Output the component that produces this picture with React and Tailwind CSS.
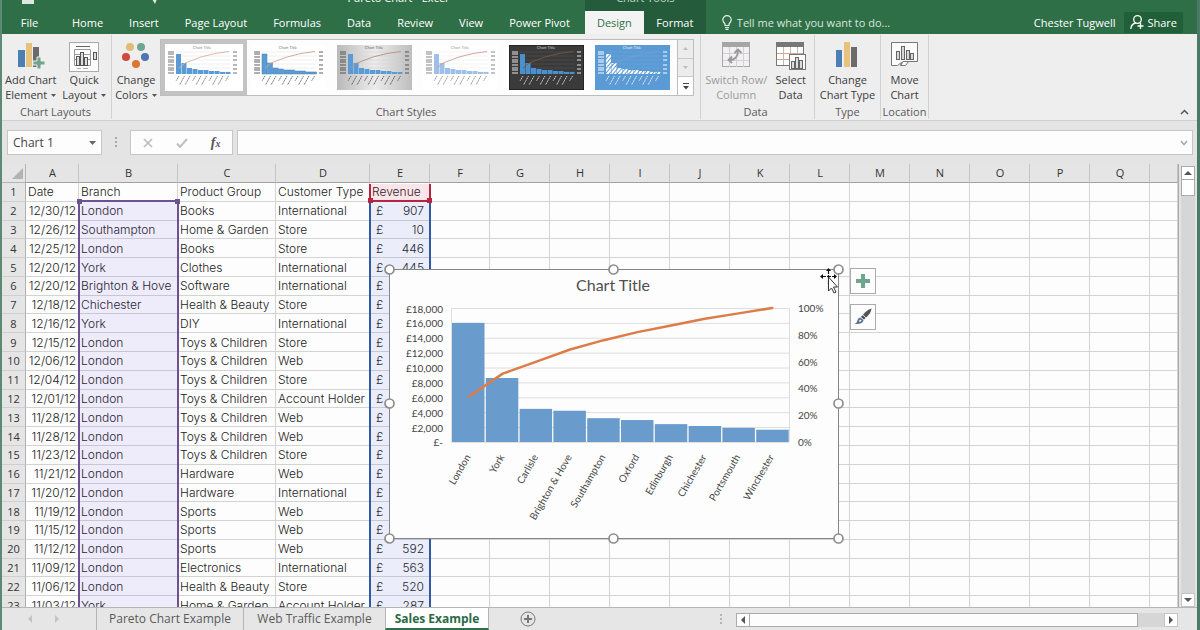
import { useState } from "react";

const tabs = ["Home", "Insert", "Page Layout", "Formulas", "Data", "Review", "View", "Power Pivot"];
const letters = ["A", "B", "C", "D", "E", "F", "G", "H", "I", "J", "K", "L", "M", "N", "O", "P", "Q", ""];

const rows = [
  ["12/30/12", "London", "Books", "International", "907"],
  ["12/26/12", "Southampton", "Home & Garden", "Store", "10"],
  ["12/25/12", "London", "Books", "Store", "446"],
  ["12/20/12", "York", "Clothes", "International", "445"],
  ["12/20/12", "Brighton & Hove", "Software", "International", ""],
  ["12/18/12", "Chichester", "Health & Beauty", "Store", ""],
  ["12/16/12", "York", "DIY", "International", ""],
  ["12/15/12", "London", "Toys & Children", "Store", ""],
  ["12/06/12", "London", "Toys & Children", "Web", ""],
  ["12/04/12", "London", "Toys & Children", "Store", ""],
  ["12/01/12", "London", "Toys & Children", "Account Holder", ""],
  ["11/28/12", "London", "Toys & Children", "Web", ""],
  ["11/28/12", "London", "Toys & Children", "Web", ""],
  ["11/23/12", "London", "Toys & Children", "Store", ""],
  ["11/21/12", "London", "Hardware", "Web", ""],
  ["11/20/12", "London", "Hardware", "International", ""],
  ["11/19/12", "London", "Sports", "Web", ""],
  ["11/15/12", "London", "Sports", "Web", ""],
  ["11/12/12", "London", "Sports", "Web", "592"],
  ["11/09/12", "London", "Electronics", "International", "563"],
  ["11/06/12", "London", "Health & Beauty", "Store", "520"],
  ["11/03/12", "York", "Home & Garden", "Account Holder", "287"],
];

const branches = [
  { name: "London", value: 16000, total: 34 },
  { name: "York", value: 8600, total: 51 },
  { name: "Carlisle", value: 4450, total: 60 },
  { name: "Brighton & Hove", value: 4200, total: 69 },
  { name: "Southampton", value: 3200, total: 76 },
  { name: "Oxford", value: 2950, total: 82 },
  { name: "Edinburgh", value: 2400, total: 87 },
  { name: "Chichester", value: 2150, total: 92 },
  { name: "Portsmouth", value: 1900, total: 96 },
  { name: "Winchester", value: 1650, total: 100 },
];

const Caret = () => (
  <svg className="inline-block ml-1 mb-px" width="5" height="3" viewBox="0 0 5 3">
    <path d="M0 0h5L2.5 3z" fill="#555" />
  </svg>
);

const AddElementIcon = () => (
  <svg width="28" height="28" viewBox="0 0 28 28">
    <rect x="1" y="8" width="7" height="17" fill="#4d7fb5" />
    <rect x="9" y="1" width="6" height="24" fill="#e6c27c" />
    <rect x="16" y="5" width="6" height="20" fill="#6b6b6b" />
    <path d="M20 15h4v4h4v4h-4v4h-4v-4h-4v-4h4z" fill="#6fa58b" stroke="#eee" strokeWidth="1" />
  </svg>
);

const QuickLayoutIcon = () => (
  <svg width="30" height="30" viewBox="0 0 30 30">
    <rect x=".5" y=".5" width="29" height="29" fill="#fcfcfc" stroke="#aaa" />
    <path d="M7 4.500h14" stroke="#666" />
    <path d="M5.500 7.500h16v16h-16zM5.500 12.500h16M5.500 17.500h16" fill="none" stroke="#999" />
    <g fill="#ddd" stroke="#555">
      <rect x="7.500" y="14.500" width="3" height="9" />
      <rect x="11.500" y="10.500" width="3" height="13" />
      <rect x="15.500" y="15.500" width="3" height="8" />
      <rect x="24.500" y="10.500" width="3" height="7" />
    </g>
    <path d="M8 26.500h4M14 26.500h5" stroke="#aaa" />
  </svg>
);

const ColorsIcon = () => (
  <svg width="28" height="28" viewBox="0 0 28 28">
    <circle cx="8" cy="5" r="4" fill="#e0bb74" />
    <circle cx="19" cy="5" r="4" fill="#6da590" />
    <circle cx="4" cy="15" r="4" fill="#cf4a3c" />
    <circle cx="23" cy="15" r="4" fill="#4f74b3" />
    <circle cx="14" cy="22" r="4" fill="#dd7431" />
  </svg>
);

const SwitchIcon = () => (
  <svg width="28" height="26" viewBox="0 0 28 26">
    <rect x=".5" y=".5" width="27" height="24" fill="#f2f0f2" stroke="#aaa" />
    <path d="M0 0h28v5H0z" fill="#a5a5a5" />
    <path d="M1 11.500h26M1 18.500h26M7.500 5v20M14.500 5v20M21.500 5v20" stroke="#d2d2d2" />
    <path d="M7 18c6 0 9-3 9-9M10 14.500L6.500 18l3.500 3M12.500 11L16 7.500 19.500 11" fill="none" stroke="#999" strokeWidth="1.800" />
  </svg>
);

const SelectDataIcon = () => (
  <svg width="30" height="28" viewBox="0 0 30 28">
    <rect x=".5" y=".5" width="27" height="23" fill="#fff" stroke="#777" />
    <path d="M0 0h28v5H0z" fill="#777" />
    <path d="M1 11.500h26M1 17.500h26" stroke="#d8a483" />
    <path d="M7.500 5v18M14.500 5v18M21.500 5v18" stroke="#bbb" />
    <rect x="13.500" y="12.500" width="16" height="15" fill="#fff" stroke="#777" />
    <g fill="#ddd" stroke="#666">
      <rect x="15.500" y="19.500" width="3" height="7" />
      <rect x="19.500" y="15.500" width="3" height="11" />
      <rect x="23.500" y="18.500" width="3" height="8" />
    </g>
  </svg>
);

const ChartTypeIcon = () => (
  <svg width="24" height="26" viewBox="0 0 24 26">
    <rect x="1" y="8" width="6" height="17" fill="#4d7fb5" />
    <rect x="9" y="0" width="6" height="25" fill="#e6c27c" />
    <rect x="16" y="5" width="6" height="20" fill="#6b6b6b" />
  </svg>
);

const MoveChartIcon = () => (
  <svg width="28" height="26" viewBox="0 0 28 26">
    <path d="M.5.500h26v19h-9l-3 4h-5l1-3-4 3h-6z" fill="#fbfbfb" stroke="#777" />
    <path d="M10 23l2-3.500h7" fill="none" stroke="#777" />
    <g fill="#d8d8d8" stroke="#666">
      <rect x="5.500" y="9.500" width="3" height="8" />
      <rect x="10.500" y="4.500" width="3" height="13" />
      <rect x="15.500" y="8.500" width="3" height="9" />
      <rect x="19.500" y="11.500" width="3" height="6" />
    </g>
  </svg>
);

const styles = [
  { bg: "#fff", bar: "#5b9bd5", ink: "#888", line: "#d9b3a0", grid: "#e4e4e4" },
  { bg: "#fff", bar: "#5b9bd5", ink: "#777", line: "#c9a596", grid: "#e4e4e4", edge: "#4580b4" },
  { bg: "url(#silver)", bar: "#5b9bd5", ink: "#666", line: "#b98e80", grid: "#d4d4d4" },
  { bg: "#fff", bar: "#9dbfe8", ink: "#999", line: "#c99f92", grid: "#ececec" },
  { bg: "#3a3a3a", bar: "#4a90cf", ink: "#ccc", line: "#7c5546", grid: "#555", frame: "#111" },
  { bg: "#5b9bd5", bar: "url(#hatch)", ink: "#e2edf8", line: "#7d9cc4", grid: "#6ba5da" },
];

const thumbBars = [20, 11, 6, 5, 4, 4, 3, 3, 2, 2];

const Thumb = ({ s }) => (
  <svg width="75" height="45" viewBox="0 0 75 45">
    <defs>
      <linearGradient id="silver">
        <stop offset="0" stopColor="#b9b9b9" />
        <stop offset=".5" stopColor="#ececec" />
        <stop offset="1" stopColor="#bdbdbd" />
      </linearGradient>
      <pattern id="hatch" width="3" height="3" patternUnits="userSpaceOnUse" patternTransform="rotate(40)">
        <rect width="2" height="3" fill="#fff" />
      </pattern>
    </defs>
    <rect width="75" height="45" fill={s.bg} stroke={s.frame} />
    <text x="37" y="4" fontSize="4" textAnchor="middle" fill={s.ink} fontFamily="Lato">
      Chart Title
    </text>
    {[7, 11, 15, 19, 23, 27].map((y) => (
      <path key={y} d={`M11 ${y}h54`} stroke={s.grid} strokeWidth=".6" />
    ))}
    {[7, 9, 12, 15, 17, 20, 23, 25, 28].map((y) => (
      <path key={y} d={`M3 ${y}h6`} stroke={s.ink} strokeWidth="1.200" />
    ))}
    {[7, 11, 15, 20, 24, 28].map((y) => (
      <path key={y} d={`M68 ${y}h4`} stroke={s.ink} strokeWidth="1.200" />
    ))}
    {thumbBars.map((h, i) => (
      <g key={i}>
        <rect x={11 + i * 5.5} y={29 - h} width="5" height={h} fill={s.bar} stroke={s.edge} strokeWidth=".5" />
        <path
          d={`M${14 + i * 5.5} 31l${i % 3 === 0 ? -3 : -5} ${i % 3 === 0 ? 5 : 9}`}
          stroke={s.ink}
          strokeWidth="1"
          strokeDasharray="1.500 .5"
        />
      </g>
    ))}
    <path d="M14 23L20 18 36 12 50 8.500 64 6.500" fill="none" stroke={s.line} strokeWidth=".9" />
  </svg>
);

const BigButton = ({ icon, top, bottom, caret, disabled }) => (
  <button
    disabled={disabled}
    className={`flex flex-col items-center pt-[7px] text-[11px] leading-[15px] whitespace-nowrap ${
      disabled ? "text-[#9b9b9b]" : "text-[#3c3c3c]"
    }`}
  >
    <span className="h-[30px]">{icon}</span>
    <span>{top}</span>
    <span>
      {bottom}
      {caret && <Caret />}
    </span>
  </button>
);

const Group = ({ title, className, children }) => (
  <section className={`flex flex-col justify-between border-r border-[#d2d2d2] ${className}`}>
    <div className="flex justify-around">{children}</div>
    <h2 className="text-center text-[11px] leading-[14px] text-[#5a5a5a]">{title}</h2>
  </section>
);

const Ribbon = () => (
  <div className="flex h-[87px] bg-[#eeeeee] border-b border-[#d0d0d0] py-px">
    <Group title="Chart Layouts" className="w-[110px] pr-[2px]">
      <BigButton icon={<AddElementIcon />} top="Add Chart" bottom="Element" caret />
      <BigButton icon={<QuickLayoutIcon />} top="Quick" bottom="Layout" caret />
    </Group>
    <Group title="Chart Styles" className="w-[589px]">
      <div className="flex w-full">
        <div className="w-[48px] flex justify-center">
          <BigButton icon={<ColorsIcon />} top="Change" bottom="Colors" caret />
        </div>
        <div className="flex mt-1 h-[57px] bg-[#fdfdfd] border border-[#bdbdbd]">
          {styles.map((s, i) => (
            <button
              key={i}
              aria-label={`Style ${i + 1}`}
              className={`w-[86px] flex items-center justify-start border-4 ${
                i === 0 ? "border-[#c3c3c3] bg-white" : "border-transparent"
              }`}
            >
              <Thumb s={s} />
            </button>
          ))}
          <div className="flex flex-col w-[16px] border-l border-[#bdbdbd] bg-[#ececec]">
            <button aria-label="Scroll up" className="flex-1 flex items-center justify-center border-b border-[#c8c8c8]">
              <svg width="5" height="3"><path d="M0 3h5L2.500 0z" fill="#bbb" /></svg>
            </button>
            <button aria-label="Scroll down" className="flex-1 flex items-center justify-center border-b border-[#c8c8c8]">
              <svg width="5" height="3"><path d="M0 0h5L2.500 3z" fill="#bbb" /></svg>
            </button>
            <button aria-label="More styles" className="flex-1 flex items-center justify-center bg-white">
              <svg width="6" height="7"><path d="M0 0h6v1H0zM0 3h6L3 6.500z" fill="#444" /></svg>
            </button>
          </div>
        </div>
      </div>
    </Group>
    <Group title="Data" className="w-[114px] pr-1">
      <BigButton icon={<SwitchIcon />} top="Switch Row/" bottom="Column" disabled />
      <BigButton icon={<SelectDataIcon />} top="Select" bottom="Data" />
    </Group>
    <Group title="Type" className="w-[66px]">
      <BigButton icon={<ChartTypeIcon />} top="Change" bottom="Chart Type" />
    </Group>
    <Group title="Location" className="w-[48px]">
      <BigButton icon={<MoveChartIcon />} top="Move" bottom="Chart" />
    </Group>
    <button aria-label="Collapse the ribbon" className="ml-auto self-end p-2 pb-1">
      <svg width="9" height="6"><path d="M1 5l3.500-3.500L8 5" fill="none" stroke="#555" strokeWidth="1.500" /></svg>
    </button>
  </div>
);

const Header = () => (
  <header className="flex h-[34px] bg-[#2f6f48] text-white text-[11px] leading-4 font-medium overflow-hidden">
    <div className="flex flex-col">
      <div className="flex items-end h-[11px] pb-[5px] pl-[20px] overflow-hidden">
        <svg className="-mb-px" width="136" height="8">
          <path d="M0 0h12v5H0zM130 0h5l-2 5z" fill="#dbe9e0" />
        </svg>
        <span className="ml-auto mr-[135px]">Pareto Chart - Excel</span>
      </div>
      <div className="flex h-[23px]">
        <button className="w-[57px] pr-[2px]">File</button>
        {tabs.map((t) => (
          <button key={t} className="px-[13px]">
            {t}
          </button>
        ))}
      </div>
    </div>
    <div className="flex flex-col ml-[2px] bg-[#245c3b]">
      <div className="flex items-end justify-center h-[11px] pb-[5px] text-[#c5d8cc] overflow-hidden">Chart Tools</div>
      <div className="flex h-[23px]">
        <button className="w-[59px] bg-[#f3f3f3] text-[#2f6f48]">Design</button>
        <button className="w-[62px]">Format</button>
      </div>
    </div>
    <div className="flex flex-1 items-center mt-[11px] pl-4 pr-[14px]">
      <svg width="10" height="15" viewBox="0 0 10 15" fill="none" stroke="#e8f1eb">
        <path d="M3 10.500V9C1.500 7.500.8 6.500.8 4.800a4.200 4.200 0 018.400 0C9.200 6.500 8.500 7.500 7 9v1.500zM3 12.500h4M3.500 14.300h3" strokeWidth="1.200" />
      </svg>
      <input
        aria-label="Tell me what you want to do"
        placeholder="Tell me what you want to do..."
        className="ml-[5px] w-[200px] bg-transparent outline-none placeholder:text-[#d8e6dc]"
      />
      <span className="ml-auto mr-[9px]">Chester Tugwell</span>
      <button className="flex items-center h-[21px] px-[6px] bg-[#215f39]">
        <svg className="mr-[3px]" width="14" height="15" viewBox="0 0 14 15" fill="none" stroke="#fff" strokeWidth="1.300">
          <circle cx="7.500" cy="4.500" r="3.800" />
          <path d="M.8 14c.3-3.500 2-5.500 5-6M10.500 8v6M7.500 11h6" />
        </svg>
        Share
      </button>
    </div>
  </header>
);

const FormulaBar = () => {
  const [name, setName] = useState("Chart 1");
  const [formula, setFormula] = useState("");

  return (
    <div className="flex items-center h-[43px] pl-[5px] pr-1 bg-[#e4e4e4]">
      <div className="flex items-center w-[95px] h-[25px] bg-[#fdfdfd] border border-[#c6c6c6] pr-[5px]">
        <input
          aria-label="Name Box"
          value={name}
          onChange={(e) => setName(e.target.value)}
          className="flex-1 min-w-0 pl-[5px] text-[12px] text-[#444] outline-none"
        />
        <button aria-label="Open names">
          <svg width="7" height="4"><path d="M0 0h7L3.500 4z" fill="#666" /></svg>
        </button>
      </div>
      <svg className="mx-[13px]" width="2" height="11" fill="#aaa">
        <path d="M0 0h2v2H0zM0 4h2v2H0zM0 8h2v2H0z" />
      </svg>
      <div className="flex items-center justify-around w-[103px] h-[25px] bg-[#fdfdfd] border border-[#c6c6c6]">
        <button aria-label="Cancel">
          <svg width="10" height="10"><path d="M1 1l8 8M9 1L1 9" stroke="#bbb" strokeWidth="1.600" /></svg>
        </button>
        <button aria-label="Enter">
          <svg width="12" height="10"><path d="M1 5.500L4 9l7-8" fill="none" stroke="#c0c0c0" strokeWidth="2" /></svg>
        </button>
        <button aria-label="Insert function" className="font-['Liberation_Serif',serif] italic font-bold text-[14px] text-[#555]">
          f<span className="text-[10px]">x</span>
        </button>
      </div>
      <div className="flex flex-1 items-center h-[25px] ml-1 bg-[#fdfdfd] border border-[#c6c6c6] pr-1">
        <input
          aria-label="Formula Bar"
          value={formula}
          onChange={(e) => setFormula(e.target.value)}
          className="flex-1 px-2 text-[12px] outline-none"
        />
        <button aria-label="Expand formula bar">
          <svg width="8" height="6"><path d="M1 1l3 3.500L7 1" fill="none" stroke="#aaa" strokeWidth="1.500" /></svg>
        </button>
      </div>
    </div>
  );
};

const handles = [
  [6.5, 6.5], [230.5, 6.5], [455.5, 6.5], [6.5, 140.5], [455.5, 140.5], [6.5, 275.5], [230.5, 275.5], [455.5, 275.5],
];

// plot area runs from 68,45 to 406,179
const ParetoChart = () => {
  const step = 33.8;
  const cx = (i) => 86 + i * 33.7;

  return (
    <svg
      width="462"
      height="281"
      viewBox="0 0 462 281"
      fontFamily="Lato, sans-serif"
      fontSize="10"
      fill="#444"
      role="img"
      aria-label="Chart Title"
    >
      <rect x="6.500" y="6.500" width="449" height="269" fill="#fdfdfd" stroke="#858585" />
      <text x="230" y="28" fontSize="16" textAnchor="middle" fill="#4f4f4f">
        Chart Title
      </text>
      {Array.from({ length: 10 }, (_, i) => {
        const y = 45.500 + i * 14.880;
        const amount = 18000 - i * 2000;
        return (
          <g key={i}>
            <path d={`M68 ${y}h338`} stroke="#dedede" />
            <text x="60" y={y + 4} textAnchor="end">
              £{amount ? amount.toLocaleString("en-GB") : "-"}
            </text>
          </g>
        );
      })}
      <path d="M68.500 45v134M406.500 45v134" stroke="#dedede" />
      {[100, 80, 60, 40, 20, 0].map((p, i) => (
        <text key={p} x="415" y={49 + i * 26.800}>
          {p}%
        </text>
      ))}
      {branches.map((b, i) => (
        <g key={b.name}>
          <rect
            x={69 + i * step}
            y={179 - (b.value / 18000) * 134}
            width={step - 1.300}
            height={(b.value / 18000) * 134}
            fill="#699ccd"
          />
          <text textAnchor="end" transform={`translate(${cx(i) + 2} 194) rotate(-60)`}>
            {b.name}
          </text>
        </g>
      ))}
      <polyline
        points={branches.map((b, i) => `${cx(i)},${179 - b.total * 1.340}`).join(" ")}
        fill="none"
        stroke="#dc7d49"
        strokeWidth="2.500"
        strokeLinecap="round"
        strokeLinejoin="round"
      />
      {handles.map(([x, y]) => (
        <circle key={`${x}-${y}`} cx={x} cy={y} r="4.500" fill="#fff" stroke="#8c8c8c" strokeWidth="1.700" />
      ))}
    </svg>
  );
};

const MoveCursor = () => (
  <svg width="18" height="28" viewBox="0 0 18 28">
    <path d="M8.500 2v14M2 8.500h14" stroke="#111" strokeWidth="1.200" strokeDasharray="4 1" />
    <path d="M8.500 0l2.500 3H6zM0 8.500L3 6v5zM17 8.500L14 6v5z" fill="#111" />
    <path d="M8.500 9v14l3-3 2.500 5 2-1-2.500-5h4z" fill="#fff" stroke="#333" />
  </svg>
);

const Sheet = () => (
  <div className="relative flex-1 min-w-0 overflow-hidden bg-[#fdfdfd] border-r border-[#a9a9a9]">
    <table className="w-full h-[451px] table-fixed border-separate border-spacing-0 text-[12px] leading-4 text-[#222]">
      <colgroup>
        <col className="w-[24px]" />
        <col className="w-[53px]" />
        <col className="w-[99px]" />
        <col className="w-[98px]" />
        <col className="w-[94px]" />
        {letters.slice(4, 17).map((l) => (
          <col key={l} className="w-[60px]" />
        ))}
        <col />
      </colgroup>
      <thead>
        <tr className="bg-[#e5e5e5] text-[#333]">
          <th className="h-[19px] border-r border-b border-[#b5b5b5]">
            <svg className="ml-auto mr-[2px]" width="11" height="11"><path d="M11 0v11H0z" fill="#b3b3b3" /></svg>
          </th>
          {letters.map((l, i) => (
            <th
              key={i}
              className="h-[19px] pl-px text-[11px] font-normal border-r border-b border-r-[#c4c4c4] border-b-[#a0a0a0]"
            >
              {l}
            </th>
          ))}
        </tr>
      </thead>
      <tbody className="font-['Inter',sans-serif] font-light whitespace-nowrap">
        {[["Date", "Branch", "Product Group", "Customer Type", "Revenue"], ...rows].map((row, r) => (
          <tr key={r}>
            <th className="pt-px text-[11px] font-['Open_Sans',sans-serif] font-normal bg-[#e5e5e5] text-[#333] border-r border-b border-r-[#b0b0b0] border-b-[#cfcfcf]">
              {r + 1}
            </th>
            {letters.map((l, c) => (
              <td
                key={c}
                className={`pt-px border-r border-b border-[#d3d3d3] ${
                  c === 0 && r > 0 ? "text-right pr-[2px]" : c === 4 && r > 0 ? "pl-[6px] pr-[5px]" : "pl-[2px]"
                }`}
              >
                {c === 4 && r > 0 ? (
                  <div className="flex justify-between">
                    <span>£</span>
                    <span>{row[c]}</span>
                  </div>
                ) : (
                  row[c]
                )}
              </td>
            ))}
          </tr>
        ))}
      </tbody>
    </table>

    {/* source ranges of the chart */}
    <div className="absolute left-[76px] top-[36px] -bottom-1 w-[101px] border-2 border-[#6b5290] bg-[#7050e0]/10">
      <i className="absolute -left-[3px] -top-[3px] size-[5px] bg-[#6b5290]" />
      <i className="absolute -right-[3px] -top-[3px] size-[5px] bg-[#6b5290]" />
    </div>
    <div className="absolute left-[367px] top-[38px] -bottom-1 w-[62px] border-x-2 border-[#2f5aa8] bg-[#5060e0]/10" />
    <div className="absolute left-[367px] top-[20px] w-[62px] h-[18px] border-2 border-t-0 border-[#b8243f] bg-[#e02040]/10">
      <i className="absolute -left-[3px] -bottom-[3px] size-[5px] bg-[#b8243f]" />
      <i className="absolute -right-[3px] -bottom-[3px] size-[5px] bg-[#b8243f]" />
    </div>

    <div className="absolute left-[381px] top-[99px]">
      <ParetoChart />
      <div className="absolute left-[437px] top-[5px]">
        <MoveCursor />
      </div>
    </div>
    <div className="absolute left-[848px] top-[104px] flex flex-col gap-[10px]">
      <button aria-label="Chart Elements" className="flex items-center justify-center size-[26px] bg-[#fdfdfd] border border-[#ababab]">
        <svg width="14" height="14"><path d="M5 0h4v5h5v4H9v5H5V9H0V5h5z" fill="#6fa58b" /></svg>
      </button>
      <button aria-label="Chart Styles" className="flex items-center justify-center size-[26px] bg-[#fdfdfd] border border-[#ababab]">
        <svg width="18" height="18" viewBox="0 0 18 18">
          <path d="M17.500.500c0 3-2.500 6.500-5.500 9L9 6.800c2-2.800 5-5.500 8.500-6.300z" fill="#555" />
          <path d="M8.500 7.300l3 2.700-1.500 1.500-3-2.700z" fill="#444" />
          <path d="M6.500 9.500l3 2.500c0 3-4 4.500-9 4 2-1 2.500-2 3-4 .5-1.500 1.500-2.500 3-2.500z" fill="#5f7393" />
          <path d="M6 11.500l1.500 1L6 14l-1-1z" fill="#fff" />
        </svg>
      </button>
    </div>
  </div>
);

const Arrow = ({ d, color = "#555" }) => (
  <svg width="8" height="8" viewBox="0 0 8 8">
    <path d={d} fill={color} />
  </svg>
);

const SheetTabs = () => (
  <footer className="flex items-center h-[23px] bg-[#e6e6e6] border-t border-[#b5b5b5] text-[12px] leading-4 text-[#5a5a5a] whitespace-nowrap">
    <div className="flex justify-center gap-[19px] w-[94px] pr-3">
      <button aria-label="Previous sheet"><Arrow d="M6 0v8L2 4z" color="#c4c4c4" /></button>
      <button aria-label="Next sheet"><Arrow d="M2 0v8l4-4z" color="#c4c4c4" /></button>
    </div>
    <button className="h-full w-[147px] border-l border-[#b5b5b5]">Pareto Chart Example</button>
    <button className="h-full w-[142px] border-l border-[#b5b5b5]">Web Traffic Example</button>
    <button className="h-full w-[104px] pt-[2px] bg-white border-x border-b-2 border-x-[#b5b5b5] border-b-[#2f7048] font-bold text-[#2a6b43]">
      Sales Example
    </button>
    <button aria-label="New sheet" className="ml-[31px]">
      <svg width="16" height="16" fill="none" stroke="#777">
        <circle cx="8" cy="8" r="7" />
        <path d="M8 4v8M4 8h8" strokeWidth="2" />
      </svg>
    </button>
    <svg className="ml-auto mr-[14px]" width="2" height="11" fill="#b5b5b5">
      <path d="M0 0h2v2H0zM0 4h2v2H0zM0 8h2v2H0z" />
    </svg>
    <div className="flex w-[37%] h-[14px] mr-[19px] mt-px bg-[#d6d6d6]">
      <button aria-label="Scroll left" className="flex items-center justify-center w-[14px] bg-white border border-[#ababab]">
        <Arrow d="M6 0v8L2 4z" />
      </button>
      <div className="flex-1 bg-[#fdfdfd] border border-l-0 border-[#ababab]" />
      <button aria-label="Scroll right" className="flex items-center justify-center w-[14px] ml-[26px] bg-white border border-[#c4c4c4]">
        <Arrow d="M2 0v8l4-4z" />
      </button>
    </div>
  </footer>
);

const App = () => {
  return (
    <div className="flex flex-col h-screen overflow-hidden border-l-2 border-r-[3px] border-l-[#5f8977] border-r-[#4c7a68] bg-[#e4e4e4] font-['Open_Sans',sans-serif]">
      <Header />
      <Ribbon />
      <FormulaBar />
      <main className="flex flex-1 min-h-0">
        <Sheet />
        <div className="flex flex-col w-[14px] mt-[2px] ml-[2px] mr-[2px] bg-[#d6d6d6]">
          <button aria-label="Scroll up" className="flex items-center justify-center h-[14px] bg-white border border-[#ababab]">
            <Arrow d="M0 6h8L4 2z" />
          </button>
          <div className="h-[16px] bg-white border border-t-0 border-[#ababab]" />
          <button aria-label="Scroll down" className="flex items-center justify-center h-[14px] mt-auto bg-white border border-[#c4c4c4]">
            <Arrow d="M0 2h8L4 6z" />
          </button>
        </div>
      </main>
      <SheetTabs />
    </div>
  );
};

export default App;
